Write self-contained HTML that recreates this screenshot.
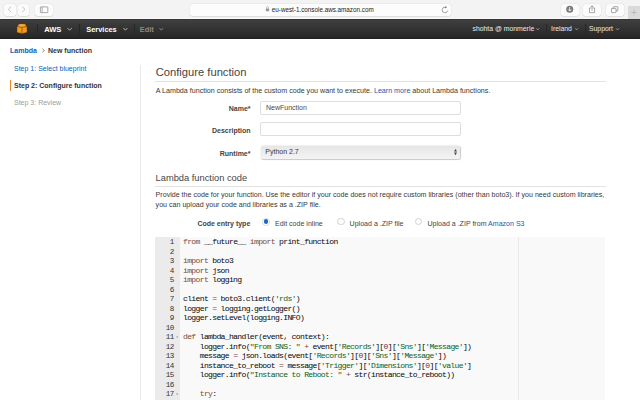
<!DOCTYPE html>
<html><head><meta charset="utf-8">
<style>
*{margin:0;padding:0;box-sizing:border-box}
html,body{width:640px;height:400px;overflow:hidden;background:#fff;font-family:"Liberation Sans",sans-serif;color:#333}
.a{position:absolute;white-space:nowrap;line-height:1}
#tb{position:absolute;left:0;top:0;width:640px;height:19px;background:#f3f3f3;border-bottom:1px solid #f8f8f8}
.btn{position:absolute;top:4px;height:11.5px;background:#fbfbfb;border-radius:2.5px;box-shadow:0 0.5px 0.5px rgba(0,0,0,0.12),0 0 0 0.5px rgba(0,0,0,0.06)}
#nav{position:absolute;left:0;top:18.75px;width:640px;height:19.75px;background:linear-gradient(#2e2e2e 0,#3f3f3f 1px,#272727 18.5px,#1b1b1b 19.75px)}
.sep{position:absolute;top:23.5px;width:1px;height:10.5px;background:#262626}
.nv{color:#fff;font-weight:bold;font-size:7.2px}
.chev{position:absolute;width:3px;height:3px;border-right:1px solid #bbb;border-bottom:1px solid #bbb;transform:rotate(45deg)}
.blue{color:#145db3}
.lbl{font-weight:bold;font-size:7px;color:#444;text-align:right}
.inp{position:absolute;left:260px;width:200.5px;height:14px;border:1px solid #ddd;border-radius:2px;background:#fff}
#ed{position:absolute;left:155.2px;top:237.4px;width:449.8px;height:170px;background:#f9f9f9}
#gut{position:absolute;left:155.2px;top:237.4px;width:25px;height:170px;background:#ebebeb}
#code{position:absolute;left:183px;top:237.3px;font-family:"Liberation Mono",monospace;font-size:8.1px;letter-spacing:-0.68px;line-height:9.5px;color:#080808;white-space:pre}
#nums{position:absolute;left:155px;top:238.4px;width:19px;font-family:"Liberation Mono",monospace;font-size:7.6px;letter-spacing:-0.4px;line-height:9.5px;color:#333;text-align:right;white-space:pre}
.k{color:#794938}.s{color:#0b6125}.n{color:#811f24}
</style></head><body>
<!-- safari toolbar -->
<div id="tb"></div>
<div class="btn" style="left:4px;width:12px"></div>
<div class="btn" style="left:17.5px;width:11.5px"></div>
<div class="btn" style="left:35px;width:18px"></div>
<div class="btn" style="left:190px;width:260.5px;background:#fcfcfc"></div>
<div class="a" style="left:271.8px;top:6.5px;font-size:6.3px;color:#222">eu-west-1.console.aws.amazon.com</div>
<div class="btn" style="left:560.5px;width:18.5px"></div>
<div class="btn" style="left:583px;width:18px"></div>
<div class="btn" style="left:605.5px;width:18px"></div>
<div style="position:absolute;left:628px;top:6px;width:12px;height:13px;background:#dadada"></div>

<!-- nav -->
<div id="nav"></div>
<div class="sep" style="left:36.5px"></div>
<div class="a nv" style="left:44.2px;top:26.1px;font-size:7.55px">AWS</div>
<div class="sep" style="left:78.5px"></div>
<div class="a nv" style="left:86.3px;top:26.1px;font-size:7.4px">Services</div>
<div class="sep" style="left:134px"></div>
<div class="a nv" style="left:139.8px;top:26.1px;font-size:7.4px;color:#8a8a8a">Edit</div>
<div class="a nv" style="left:472.5px;top:26.4px;font-weight:normal;font-size:6.85px;color:#ececec">shohta @ monmerle</div>
<div class="sep" style="left:545.8px"></div>
<div class="a nv" style="left:551px;top:26.4px;font-weight:normal;font-size:6.85px;color:#ececec">Ireland</div>
<div class="sep" style="left:584.6px"></div>
<div class="a nv" style="left:589px;top:26.4px;font-weight:normal;font-size:6.85px;color:#ececec">Support</div>


<svg style="position:absolute;left:0;top:0" width="640" height="40" viewBox="0 0 640 40">
<path d="M11.1,6.6 L8.3,9.35 L11.1,12.1" fill="none" stroke="#b8b8b8" stroke-width="0.8"/>
<path d="M22.2,6.6 L25,9.35 L22.2,12.1" fill="none" stroke="#b8b8b8" stroke-width="0.8"/>
<rect x="40.4" y="6.9" width="7.4" height="5.7" rx="0.3" fill="none" stroke="#808080" stroke-width="0.65"/>
<path d="M42.1,7 V12.5" stroke="#808080" stroke-width="0.6"/>
<rect x="265.8" y="8.4" width="3.4" height="2.9" rx="0.3" fill="#999"/>
<path d="M266.5,8.6 V7.6 A1,1 0 0 1 268.5,7.6 V8.6" fill="none" stroke="#999" stroke-width="0.6"/>
<path d="M445.2,7.2 A2.8,2.8 0 1 0 447.7,10.6" fill="none" stroke="#7a7a7a" stroke-width="0.7"/>
<path d="M445.1,6 L447.1,7.25 L445.1,8.5 Z" fill="#7a7a7a"/>
<circle cx="569.7" cy="9.3" r="3.5" fill="#777"/>
<path d="M569.7,6.9 V11 M568.1,9.4 L569.7,11.1 L571.3,9.4" fill="none" stroke="#fff" stroke-width="0.85"/>
<path d="M590.9,8.1 H589.5 V12.6 H594.6 V8.1 H593.2" fill="none" stroke="#7a7a7a" stroke-width="0.65"/>
<path d="M592.05,10.6 V5.8 M590.5,7.4 L592.05,5.8 L593.6,7.4" fill="none" stroke="#7a7a7a" stroke-width="0.65"/>
<rect x="613.3" y="6.7" width="4.5" height="4.2" rx="0.5" fill="none" stroke="#7a7a7a" stroke-width="0.65"/>
<rect x="611.5" y="8.4" width="4.5" height="4.2" rx="0.5" fill="#fbfbfb" stroke="#7a7a7a" stroke-width="0.65"/>
<path d="M634,9.8 V15.2 M631.2,12.5 H636.8" stroke="#a8a8a8" stroke-width="0.6"/>
<path d="M16.9,26 L22,24.9 L27.1,26 L27.1,32.4 L22,33.7 L16.9,32.4 Z" fill="#f39a1c" stroke="#1c1c1c" stroke-width="0.4"/>
<ellipse cx="22" cy="25.3" rx="3.9" ry="1.3" fill="#f7a935"/>
<path d="M17.1,26.4 Q22,28.6 26.9,26.4" fill="none" stroke="#8a5208" stroke-width="0.8"/>
<path d="M22,27.5 V33.5" stroke="#9c5e0c" stroke-width="1"/>
<path d="M67.5,28 L69.7,30.2 L71.9,28" fill="none" stroke="#bbb" stroke-width="0.9"/>
<path d="M123.4,28 L125.4,30.2 L127.4,28" fill="none" stroke="#bbb" stroke-width="0.9"/>
<path d="M159.4,28 L161.3,30.2 L163.2,28" fill="none" stroke="#888" stroke-width="0.9"/>
<path d="M536.6,28.4 L537.8,29.8 L539,28.4" fill="none" stroke="#bbb" stroke-width="0.8"/>
<path d="M575.3,28.4 L576.6,29.8 L577.9,28.4" fill="none" stroke="#bbb" stroke-width="0.8"/>
<path d="M616.1,28.4 L617.5,29.8 L618.9,28.4" fill="none" stroke="#bbb" stroke-width="0.8"/>
</svg>

<!-- breadcrumb -->
<div class="a blue" style="left:10px;top:46.7px;font-size:7px;font-weight:bold">Lambda</div>
<svg style="position:absolute;left:0;top:40px" width="60" height="20"><path d="M42.3,8.7 L44.4,10.5 L42.3,12.3" fill="none" stroke="#666" stroke-width="0.7"/></svg>
<div class="a" style="left:48px;top:46.7px;font-size:7px;font-weight:bold;color:#333">New function</div>

<!-- steps -->
<div class="a blue" style="left:14px;top:65.1px;font-size:7px">Step 1: Select blueprint</div>
<div style="position:absolute;left:9.8px;top:80px;width:1.5px;height:11px;background:#e8842a"></div>
<div class="a" style="left:14px;top:82.4px;font-size:7px;font-weight:bold;color:#333">Step 2: Configure function</div>
<div class="a" style="left:14px;top:99.1px;font-size:7px;color:#9c9c9c">Step 3: Review</div>
<div style="position:absolute;left:140px;top:65px;width:1px;height:335px;background:#e9e9e9"></div>

<!-- configure function -->
<div class="a" style="left:155.7px;top:66.6px;font-size:11.2px;color:#454545">Configure function</div>
<div style="position:absolute;left:155px;top:81px;width:450.5px;height:1px;background:#e2e2e2"></div>
<div class="a" style="left:155.7px;top:87.6px;font-size:7.13px;color:#383838">A Lambda function consists of the custom code you want to execute. <span class="blue">Learn more</span> about Lambda functions.</div>

<div class="a lbl" style="right:389.5px;top:105.4px">Name*</div>
<div class="inp" style="top:100.5px"></div>
<div class="a" style="left:266px;top:104.1px;font-size:7px;color:#4a4a4a">NewFunction</div>
<div class="a lbl" style="right:389.5px;top:127.1px">Description</div>
<div class="inp" style="top:122.2px"></div>
<div class="a lbl" style="right:389.5px;top:150.1px">Runtime*</div>
<div class="inp" style="left:260.7px;top:145.5px;height:13.5px;width:199px;background:linear-gradient(#e6e6e6,#f4f4f4);border:none;box-shadow:0.5px 0.5px 1px rgba(0,0,0,0.18), 0 0 0 0.4px rgba(0,0,0,0.08)"></div>
<svg style="position:absolute;left:450px;top:145px" width="12" height="14"><path d="M4,6.6 L5.5,4 L7,6.6 Z M4,7.6 L5.5,10.2 L7,7.6 Z" fill="#444"/></svg>
<div class="a" style="left:265.3px;top:148.1px;font-size:7px;color:#3a3a3a">Python 2.7</div>

<!-- lambda function code -->
<div class="a" style="left:155.6px;top:174px;font-size:9.3px;color:#454545">Lambda function code</div>
<div style="position:absolute;left:155px;top:186px;width:450.5px;height:1px;background:#e2e2e2"></div>
<div class="a" style="left:155.6px;top:192.4px;font-size:7.1px;color:#383838">Provide the code for your function. Use the editor if your code does not require custom libraries (other than boto3). If you need custom libraries,</div>
<div class="a" style="left:155.6px;top:202.3px;font-size:7.1px;color:#383838">you can upload your code and libraries as a .ZIP file.</div>
<div class="a lbl" style="left:197.4px;top:220px;text-align:left">Code entry type</div>

<div style="position:absolute;left:262.3px;top:218.1px;width:7.5px;height:7.5px;border-radius:50%;background:#fff;border:0.6px solid #d5dbe3"></div>
<div style="position:absolute;left:263.8px;top:219.4px;width:4.4px;height:4.4px;border-radius:50%;background:#1a67c8"></div>
<div class="a" style="left:275px;top:219.6px;font-size:7.05px;color:#444">Edit code inline</div>
<div style="position:absolute;left:337.2px;top:217.9px;width:7.6px;height:7.6px;border-radius:50%;background:#fff;border:0.6px solid #d2d2d2"></div>
<div class="a" style="left:349.6px;top:219.6px;font-size:7.05px;color:#444">Upload a .ZIP file</div>
<div style="position:absolute;left:414.7px;top:217.6px;width:7.6px;height:7.6px;border-radius:50%;background:#fff;border:0.6px solid #d2d2d2"></div>
<div class="a" style="left:427.5px;top:219.6px;font-size:7.05px;color:#444">Upload a .ZIP from <span class="blue">Amazon S3</span></div>

<!-- editor -->
<div id="ed"></div>
<div id="gut"></div>
<div style="position:absolute;left:518px;top:237.4px;width:1px;height:170px;background:#e8e8e8"></div>
<svg style="position:absolute;left:170px;top:330px" width="12" height="70"><path d="M6.1,6.5 L8.2,6.5 L7.15,7.9 Z M6.1,63.5 L8.2,63.5 L7.15,64.9 Z" fill="#888"/></svg>
<div id="nums">1
2
3
4
5
6
7
8
9
10
11
12
13
14
15
16
17</div>
<div id="code"><span class="k">from</span> __future__ <span class="k">import</span> print_function

<span class="k">import</span> boto3
<span class="k">import</span> json
<span class="k">import</span> logging

client <span class="k">=</span> boto3.client(<span class="s">'rds'</span>)
logger <span class="k">=</span> logging.getLogger()
logger.setLevel(logging.INFO)

<span class="k">def</span> lambda_handler(event, context):
    logger.info(<span class="s">"From SNS: "</span> <span class="k">+</span> event[<span class="s">'Records'</span>][<span class="n">0</span>][<span class="s">'Sns'</span>][<span class="s">'Message'</span>])
    message <span class="k">=</span> json.loads(event[<span class="s">'Records'</span>][<span class="n">0</span>][<span class="s">'Sns'</span>][<span class="s">'Message'</span>])
    instance_to_reboot <span class="k">=</span> message[<span class="s">'Trigger'</span>][<span class="s">'Dimensions'</span>][<span class="n">0</span>][<span class="s">'value'</span>]
    logger.info(<span class="s">"Instance to Reboot: "</span> <span class="k">+</span> str(instance_to_reboot))

    <span class="k">try</span>:</div>
</body></html>
